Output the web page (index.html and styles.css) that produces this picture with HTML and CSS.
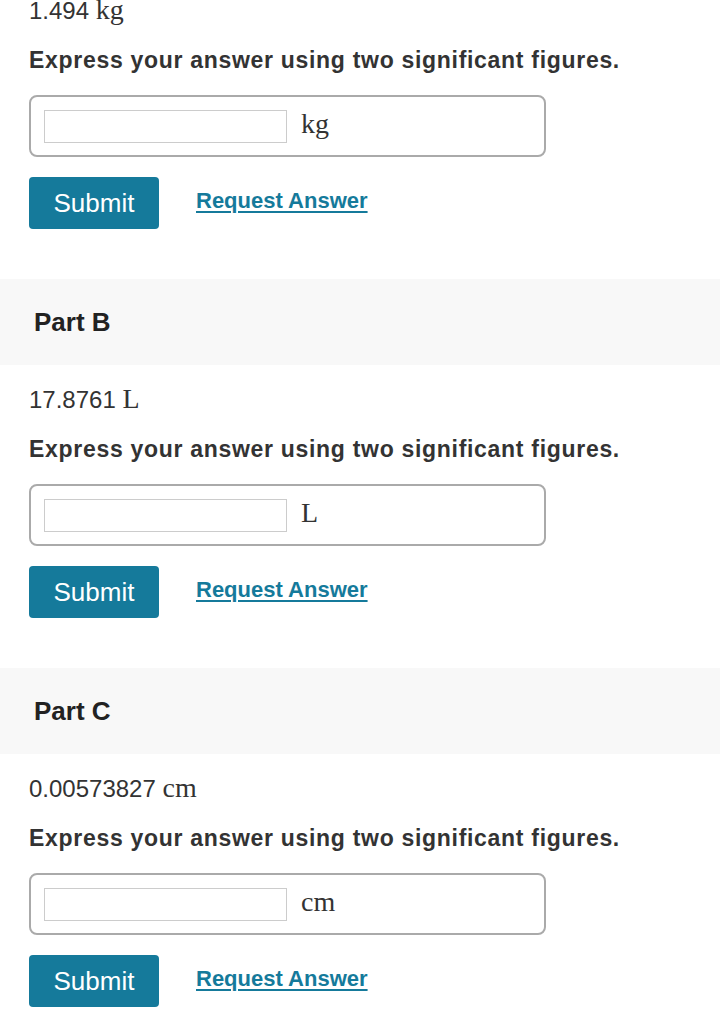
FILE: index.html
```html
<!DOCTYPE html>
<html lang="en">
<head>
    <meta charset="UTF-8">
    <meta name="viewport" content="width=device-width, initial-scale=1.0">
    <title>Significant Figures</title>
    <link rel="stylesheet" href="styles.css">
</head>
<body>

    <!-- Part A (header scrolled out of view) -->
    <div class="part part-first">
        <div class="part-body">
            <p class="value">1.494 <span class="unit">kg</span></p>
            <p class="instruction">Express your answer using two significant figures.</p>
            <div class="answer-box">
                <input type="text" class="answer-input">
                <span class="unit">kg</span>
            </div>
            <div class="actions">
                <button class="btn-submit">Submit</button>
                <a href="#" class="request-link">Request Answer</a>
            </div>
        </div>
    </div>

    <!-- Part B -->
    <div class="part">
        <div class="part-header">
            <h2>Part B</h2>
        </div>
        <div class="part-body">
            <p class="value">17.8761 <span class="unit">L</span></p>
            <p class="instruction">Express your answer using two significant figures.</p>
            <div class="answer-box">
                <input type="text" class="answer-input">
                <span class="unit">L</span>
            </div>
            <div class="actions">
                <button class="btn-submit">Submit</button>
                <a href="#" class="request-link">Request Answer</a>
            </div>
        </div>
    </div>

    <!-- Part C -->
    <div class="part">
        <div class="part-header">
            <h2>Part C</h2>
        </div>
        <div class="part-body">
            <p class="value">0.00573827 <span class="unit">cm</span></p>
            <p class="instruction">Express your answer using two significant figures.</p>
            <div class="answer-box">
                <input type="text" class="answer-input">
                <span class="unit">cm</span>
            </div>
            <div class="actions">
                <button class="btn-submit">Submit</button>
                <a href="#" class="request-link">Request Answer</a>
            </div>
        </div>
    </div>

</body>
</html>
```

FILE: styles.css
```css
body {
    margin: 0;
    background-color: #fff;
    color: #333;
    font-family: "Liberation Sans", Arial, Helvetica, sans-serif;
    overflow: hidden;
}

/* Each part: grey header band + body */
.part {
    margin-bottom: 50px;
}

.part-first .part-body {
    margin-top: -24px; /* page is scrolled, Part A header is off screen */
}

.part-header {
    height: 86px;
    background-color: #f8f8f8;
    display: flex;
    align-items: center;
    padding-left: 34px;
}

.part-header h2 {
    margin: 0;
    font-size: 26px;
    font-weight: bold;
    color: #222;
}

.part-body {
    padding: 20px 29px 0;
}

.value {
    margin: 0;
    height: 30px;
    font-size: 24px;
    line-height: 30px;
    color: #333;
}

.unit {
    font-family: "Liberation Serif", "DejaVu Serif", serif;
    font-size: 28px;
    line-height: 1;
}

.instruction {
    margin: 21px 0 0;
    font-size: 23px;
    line-height: 26px;
    font-weight: bold;
    letter-spacing: 0.7px;
    color: #333;
}

/* Answer field */
.answer-box {
    margin-top: 22px;
    width: 517px;
    height: 62px;
    box-sizing: border-box;
    border: 2px solid #aaa;
    border-radius: 8px;
    padding: 13px;
    display: flex;
    align-items: center;
    gap: 14px;
}

.answer-input {
    width: 243px;
    height: 33px;
    box-sizing: border-box;
    border: 1px solid #ccc;
    margin: 0;
    padding: 0 6px;
    font-size: 18px;
}

.answer-box .unit {
    color: #333;
    margin-top: -4px;
}

/* Buttons */
.actions {
    margin-top: 20px;
    display: flex;
    align-items: center;
    gap: 37px;
}

.btn-submit {
    width: 130px;
    height: 52px;
    border: none;
    border-radius: 4px;
    background-color: #157a9b;
    color: #fff;
    font-family: "Liberation Sans", Arial, sans-serif;
    font-size: 26px;
    cursor: pointer;
}

.request-link {
    color: #157a9b;
    font-size: 22px;
    font-weight: bold;
    text-decoration: underline;
    text-underline-offset: 3px;
    margin-top: -4px;
}
```
